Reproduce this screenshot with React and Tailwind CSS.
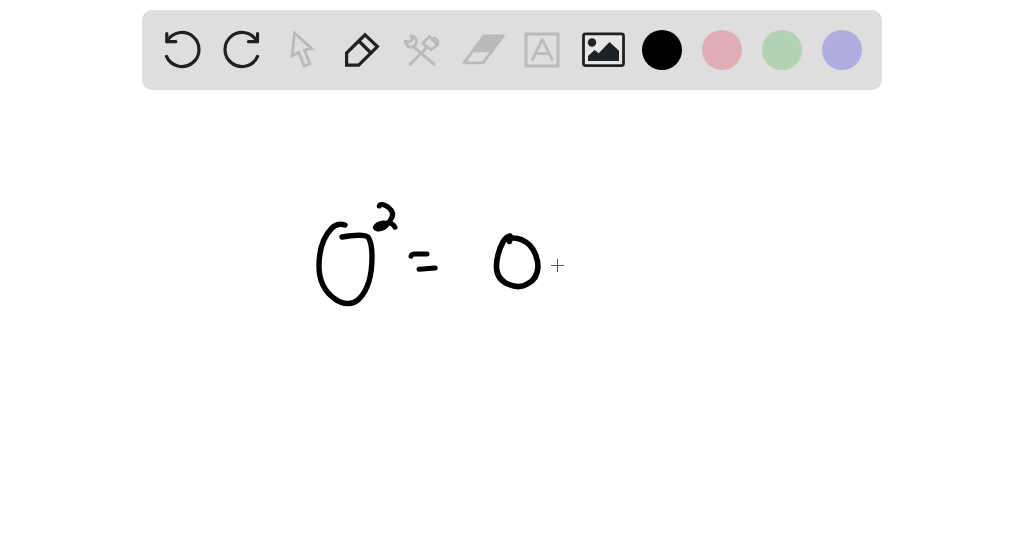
const COLORS = [
  { name: 'Black', className: 'bg-black' },
  { name: 'Red', className: 'bg-[#e1adb4]' },
  { name: 'Green', className: 'bg-[#b3d1b3]' },
  { name: 'Purple', className: 'bg-[#b1ade0]' },
]

function ToolButton({ label, muted = false, children }) {
  return (
    <button type="button" aria-label={label} className={`size-[60px] ${muted ? 'text-[#b9babb]' : 'text-[#1f2224]'}`}>
      <svg
        viewBox="0 0 60 60"
        className="size-full"
        fill="none"
        stroke="currentColor"
        strokeWidth="3.2"
        strokeLinecap="round"
        strokeLinejoin="round"
        aria-hidden="true"
      >
        {children}
      </svg>
    </button>
  )
}

function Toolbar() {
  return (
    <div role="toolbar" aria-label="Drawing tools" className="flex items-center rounded-[10px] bg-[#dedede] p-[10px]">
      <ToolButton label="Undo">
        <path d="M14.5 36.5A17 17 0 1 0 15 21.5" />
        <path d="M14.8 13.5V21.7H23.8" />
      </ToolButton>
      <ToolButton label="Redo">
        <path d="M45.5 36.5A17 17 0 1 1 45 21.5" />
        <path d="M45.5 13.5V21.7H36.5" />
      </ToolButton>
      <ToolButton label="Select" muted>
        <path d="M22.5 13L39.8 28.6L32.4 30L38 43.8L32.3 46.2L26.8 32.4L20 35.8Z" strokeWidth="2.8" strokeLinejoin="miter" />
      </ToolButton>
      <ToolButton label="Pen">
        <path d="M33 14.8L45.4 26.6L26.7 45.2H14.6V33Z" strokeLinejoin="miter" />
        <path d="M26.8 21L39 33" />
      </ToolButton>
      <ToolButton label="Tools" muted>
        <path d="M13.4 21C13.6 26 17.5 28.2 21.2 26.6L42 44.2" strokeWidth="3" />
        <path d="M21.2 26.6C26.3 24 25.5 16.4 18.8 15.8L20.6 19.4L17.4 22L13.4 21" strokeWidth="2.6" />
        <path d="M18.3 44.2L34 28.2" strokeWidth="3" />
        <path d="M30.8 23.4L37.2 16.4L45.6 24.6L39.4 29.8Z" strokeWidth="2.8" />
        <path d="M41 18.6L43 18L46.2 21.4L45.6 24.6" strokeWidth="2.6" />
      </ToolButton>
      <ToolButton label="Eraser" muted>
        <path d="M31.8 16H51.2L31 42.8H12Z" strokeWidth="2.8" />
        <path d="M31.8 16H51.2L39.8 31.5H20.2Z" fill="currentColor" strokeWidth="1.5" />
      </ToolButton>
      <ToolButton label="Text" muted>
        <path d="M14 14H46V46H14Z" strokeWidth="3" strokeLinejoin="miter" />
        <path d="M20.4 39.6L30.3 19.4L40.2 39.6M23.2 33.6H37.2" strokeWidth="2.6" />
      </ToolButton>
      <ToolButton label="Image">
        <rect x="11.5" y="13.8" width="40" height="31.8" rx="2" fill="#e6e6e6" strokeWidth="2.8" />
        <circle cx="20" cy="22.5" r="4.2" fill="currentColor" stroke="none" />
        <path d="M16 41V36L22.7 30L26.7 33.2L37.5 22L47 30.8V41Z" fill="currentColor" stroke="none" />
      </ToolButton>
      {COLORS.map((color) => (
        <button key={color.name} type="button" aria-label={color.name} className="flex size-[60px] items-center justify-center">
          <span className={`size-10 rounded-full ${color.className}`} />
        </button>
      ))}
    </div>
  )
}

function Canvas() {
  return (
    <svg
      viewBox="0 90 1024 470"
      className="block w-full"
      fill="none"
      stroke="black"
      strokeWidth="5.4"
      strokeLinecap="round"
      strokeLinejoin="round"
      role="img"
      aria-label="Handwritten equation"
    >
      <path d="M345 225C340 223.5 336 224 332 228C323 237 319 251 319 266C319 282 325 292 335 299C343 305 353 305 359 299C369 289 372 274 372 257C372 247 371 241 368 237C365 234.5 353 235 342 237" />
      <path d="M379.3 206C380 203.5 384 204 388 207C393 211 394 215 391 219C390 221 388 223 386 223.5C390 222 393.5 224 395 227.2" strokeWidth="5" />
      <ellipse cx="381" cy="226" rx="8.4" ry="5" transform="rotate(-18 381 226)" fill="black" stroke="none" />
      <path d="M411 256.3C411.5 254.5 412.5 254 415 254L427 254M419 269.2L435.2 268" strokeWidth="5" />
      <path
        d="M509.5 241.5L508.5 237L513 238C519 238 525 240.5 530 245.5C534.5 250 538 259 538 267C537.5 275 534 280.5 528 283.5C522 287.5 516 287.5 509 284.5C501 281.5 497 276 496.5 268C496 260 499 249 503 242C505 238.5 507 236.5 510 236"
        strokeWidth="5.6"
      />
      <path d="M557.5 259V272M551 265.5H564" stroke="#555" strokeWidth="1" strokeLinecap="butt" />
    </svg>
  )
}

export default function App() {
  return (
    <div className="min-h-screen bg-white">
      <header className="flex justify-center pt-[10px]">
        <Toolbar />
      </header>
      <main>
        <Canvas />
      </main>
    </div>
  )
}
